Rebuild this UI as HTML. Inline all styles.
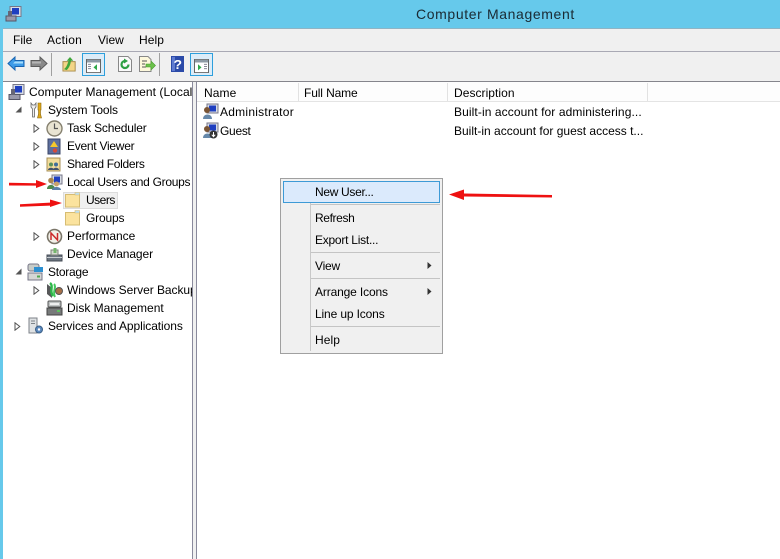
<!DOCTYPE html>
<html><head><meta charset="utf-8"><title>Computer Management</title>
<style>
html,body{margin:0;padding:0;background:#fff}
#p{position:relative;width:780px;height:559px;overflow:hidden;background:#fff;font:12px/16px "Liberation Sans",sans-serif;color:#000}
#p div,#p svg{position:absolute}
.t{white-space:nowrap}
</style></head><body><div id="p">
<div style="left:0;top:0;width:780px;height:28px;background:#66c9eb"></div>
<div style="left:0;top:28px;width:3px;height:531px;background:#66c9eb"></div>
<div style="left:3px;top:28px;width:777px;height:1px;background:#8fb4c4"></div>
<div style="left:3px;top:29px;width:777px;height:52px;background:#f0f0f0"></div>
<div style="left:3px;top:51px;width:777px;height:1px;background:#a9a9b4"></div>
<div style="left:3px;top:81px;width:777px;height:1px;background:#85858c"></div>
<div style="left:192px;top:82px;width:5px;height:477px;background:#f0f0f0"></div>
<div style="left:192px;top:82px;width:1px;height:477px;background:#8a8a9c"></div>
<div style="left:196px;top:82px;width:1px;height:477px;background:#8a8a9c"></div>
<div class="t" style="left:416px;top:5px;font-size:14px;line-height:18px;letter-spacing:.62px;color:#1a2a33">Computer Management</div>

<svg style="left:5px;top:5px" width="17" height="17" viewBox="0 0 17 17"><rect x="5" y="1.500" width="11" height="10" fill="#d8dde6" stroke="#778"/><rect x="7" y="3" width="7" height="6.500" fill="#1f3fc0"/><rect x="1" y="11" width="10" height="5" fill="#99a" stroke="#556"/><rect x="3" y="6" width="4" height="5" fill="#667"/></svg>

<div class="t" style="left:13px;top:32px;letter-spacing:0">File</div>
<div class="t" style="left:47px;top:32px;letter-spacing:.3px">Action</div>
<div class="t" style="left:98px;top:32px;letter-spacing:0">View</div>
<div class="t" style="left:139px;top:32px;letter-spacing:.1px">Help</div>

<svg style="left:7px;top:55px" width="18" height="17" viewBox="0 0 18 17"><path d="M1 8.500 8 2V5.500H17V11.500H8V15Z" fill="#3d9be8" stroke="#1763b0"/><path d="M8 6.500H16V8.500H6Z" fill="#a5dcfb"/></svg>
<svg style="left:30px;top:55px" width="18" height="17" viewBox="0 0 18 17"><path d="M17 8.500 10 2V5.500H1V11.500H10V15Z" fill="#8a8a8a" stroke="#5c5c5c"/><path d="M2 6.500H11V8.500H2Z" fill="#b5b5b5"/></svg>
<div style="left:51px;top:53px;width:1px;height:23px;background:#a0a0a0"></div>
<svg style="left:62px;top:56px" width="16" height="16" viewBox="0 0 17 17"><path d="M1 6H14V16H1Z" fill="#f3d587" stroke="#a88b4a"/><path d="M2 14C5 12 6 8 7 5L5 5 8.500 1 12 5 9.500 5C9 9 8 12 5 15Z" fill="#3fa63a"/></svg>
<div style="left:82px;top:53px;width:23px;height:23px;border:1px solid #2d9fdc;box-sizing:border-box;background:#dcecf8"></div>
<svg style="left:86px;top:59px" width="15" height="14" viewBox="0 0 15 16" preserveAspectRatio="none"><rect x=".5" y=".5" width="14" height="15" fill="#fff" stroke="#666"/><rect x="1" y="1" width="13" height="3" fill="#8d9aa5"/><path d="M2 6H5M2 8.500H5M2 11H5" stroke="#778" /><path d="M11 6V13L7.500 9.500Z" fill="#2fa84a"/></svg>
<svg style="left:118px;top:56px" width="14" height="16" viewBox="0 0 14 16"><path d="M.5.5H10L13.500 4V15.500H.5Z" fill="#fafafa" stroke="#888"/><path d="M10.500 8.500A3.500 3.500 0 1 1 7 5" fill="none" stroke="#2ea043" stroke-width="2.200"/><path d="M6 2.500 10 5 6 7.500Z" fill="#2ea043"/></svg>
<svg style="left:139px;top:56px" width="17" height="16" viewBox="0 0 17 16"><path d="M.5.500H9L12 3.500V15.500H.5Z" fill="#fdf8dc" stroke="#888"/><path d="M3 5H8M3 8H6M3 11H7" stroke="#555"/><path d="M7 8H12V5L16.500 9.500 12 14V11H7Z" fill="#6cc24a" stroke="#479a2e" stroke-width=".6"/></svg>
<div style="left:159px;top:53px;width:1px;height:23px;background:#a0a0a0"></div>
<svg style="left:171px;top:56px" width="13" height="16" viewBox="0 0 13 17" preserveAspectRatio="none"><rect width="13" height="17" fill="#2b4aa8"/><rect x="1" y="1" width="3" height="15" fill="#5f7bd0"/><text x="6.800" y="14" font-family="Liberation Sans" font-size="14" font-weight="bold" text-anchor="middle" fill="#fff">?</text></svg>
<div style="left:190px;top:53px;width:23px;height:23px;border:1px solid #2d9fdc;box-sizing:border-box;background:#dcecf8"></div>
<svg style="left:194px;top:59px" width="15" height="14" viewBox="0 0 15 16" preserveAspectRatio="none"><rect x=".5" y=".5" width="14" height="15" fill="#fff" stroke="#666"/><rect x="1" y="1" width="13" height="3" fill="#8d9aa5"/><path d="M10 6H13M10 8.500H13M10 11H13" stroke="#778"/><path d="M4 6V13L7.500 9.500Z" fill="#2fa84a"/></svg>

<!-- tree -->
<svg style="left:8px;top:84px" width="17" height="17" viewBox="0 0 17 17"><rect x="5" y=".5" width="11" height="10" fill="#d8dde6" stroke="#778"/><rect x="7" y="2" width="7" height="6.500" fill="#1f3fc0"/><rect x="1" y="10.500" width="11" height="5" fill="#99a" stroke="#556"/><rect x="3" y="5" width="4" height="6" fill="#667"/></svg>
<div class="t" style="left:29px;top:84px;width:163px;overflow:hidden;letter-spacing:.05px">Computer Management (Local</div>

<svg style="left:15px;top:106px" width="7" height="7" viewBox="0 0 7 7"><path d="M6.500 .5V6.500H.5Z" fill="#555"/></svg>
<svg style="left:29px;top:102px" width="14" height="17" viewBox="0 0 14 17"><path d="M2 1V5L3.500 7V15H5.500V7L7 5V1L5.500 3H3.500Z" fill="#eee" stroke="#666" stroke-width=".8"/><path d="M9 1H12V8H11.500V12L12.500 16H8.500L9.500 12V8H9Z" fill="#e0a818" stroke="#86650e" stroke-width=".6"/></svg>
<div class="t" style="left:48px;top:102px;letter-spacing:-.1px">System Tools</div>

<svg style="left:33px;top:124px" width="7" height="9" viewBox="0 0 7 9"><path d="M1 .8V8.200L5.800 4.500Z" fill="#fff" stroke="#555"/></svg>
<svg style="left:46px;top:120px" width="17" height="17" viewBox="0 0 17 17"><circle cx="8.500" cy="8.500" r="7.500" fill="#e9e4d2" stroke="#85806f" stroke-width="1.400"/><path d="M8.500 3.500V8.500H12" fill="none" stroke="#555" stroke-width="1.200"/></svg>
<div class="t" style="left:67px;top:120px;letter-spacing:-.18px">Task Scheduler</div>

<svg style="left:33px;top:142px" width="7" height="9" viewBox="0 0 7 9"><path d="M1 .8V8.200L5.800 4.500Z" fill="#fff" stroke="#555"/></svg>
<svg style="left:47px;top:138px" width="14" height="17" viewBox="0 0 14 17"><rect x="1" y="1" width="12" height="15" fill="#5d6f9e" stroke="#3a4567"/><path d="M7 3 11 9H3Z" fill="#f5c92d"/><circle cx="8" cy="12.500" r="2.200" fill="#d34a3c"/></svg>
<div class="t" style="left:67px;top:138px;letter-spacing:-.26px">Event Viewer</div>

<svg style="left:33px;top:160px" width="7" height="9" viewBox="0 0 7 9"><path d="M1 .8V8.200L5.800 4.500Z" fill="#fff" stroke="#555"/></svg>
<svg style="left:46px;top:156px" width="15" height="16" viewBox="0 0 15 16"><path d="M1 2H14V15H1Z" fill="#f2dc9a" stroke="#a89058"/><circle cx="5" cy="8.500" r="2" fill="#5a8f5a"/><circle cx="10" cy="8.500" r="2" fill="#3f6d9a"/><path d="M2 14C2 11 8 11 8 14ZM7 14C7 11 13 11 13 14Z" fill="#40506a"/></svg>
<div class="t" style="left:67px;top:156px;letter-spacing:-.32px">Shared Folders</div>

<svg style="left:46px;top:174px" width="17" height="17" viewBox="0 0 17 17"><rect x="6" y="1" width="10" height="9" fill="#d8dde6" stroke="#778"/><rect x="8" y="2.500" width="6" height="6" fill="#1f3fc0"/><circle cx="5" cy="6.500" r="2.800" fill="#a8854f"/><circle cx="10.500" cy="10" r="2.500" fill="#c9a26a"/><path d="M1 15C1 9.500 9 9.500 9 15Z" fill="#4d8a4d"/><path d="M6 16C6 12 15 12 15 16Z" fill="#5a7fa8"/></svg>
<div class="t" style="left:67px;top:174px;letter-spacing:-.28px">Local Users and Groups</div>

<div style="left:63px;top:192px;width:55px;height:17px;background:#f0f0f0;border:1px solid #dcdcdc;box-sizing:border-box"></div>
<svg style="left:65px;top:192px" width="15" height="16" viewBox="0 0 15 16"><path d="M.5 2.500H14.500V15H.5Z" fill="#fbe39e" stroke="#d6bc72"/><path d="M10 .5H14.500V3H10Z" fill="#bfe0f0" stroke="#d6bc72" stroke-width=".6"/></svg>
<div class="t" style="left:86px;top:192px;letter-spacing:-.5px">Users</div>
<svg style="left:65px;top:210px" width="15" height="16" viewBox="0 0 15 16"><path d="M.5 2.500H14.500V15H.5Z" fill="#fbe39e" stroke="#d6bc72"/><path d="M10 .5H14.500V3H10Z" fill="#bfe0f0" stroke="#d6bc72" stroke-width=".6"/></svg>
<div class="t" style="left:86px;top:210px;letter-spacing:-.18px">Groups</div>

<svg style="left:33px;top:232px" width="7" height="9" viewBox="0 0 7 9"><path d="M1 .8V8.200L5.800 4.500Z" fill="#fff" stroke="#555"/></svg>
<svg style="left:46px;top:228px" width="17" height="17" viewBox="0 0 17 17"><circle cx="8.500" cy="8.500" r="7" fill="#f2f0e8" stroke="#7a7568" stroke-width="1.600"/><path d="M5 12V5L11.500 12V5" fill="none" stroke="#cc2a2a" stroke-width="1.500"/></svg>
<div class="t" style="left:67px;top:228px;letter-spacing:-.04px">Performance</div>

<svg style="left:46px;top:246px" width="17" height="16" viewBox="0 0 17 16"><path d="M1 9H16V15H1Z" fill="#6b7480" stroke="#444b55"/><path d="M5 9V4H12V9Z" fill="#d6dbd2" stroke="#7c8278"/><rect x="7.500" y="2" width="3" height="5" fill="#74b56c"/><path d="M1 11.500H16" stroke="#c8ccd0"/></svg>
<div class="t" style="left:67px;top:246px;letter-spacing:-.1px">Device Manager</div>

<svg style="left:15px;top:268px" width="7" height="7" viewBox="0 0 7 7"><path d="M6.500 .5V6.500H.5Z" fill="#555"/></svg>
<svg style="left:27px;top:263px" width="17" height="18" viewBox="0 0 17 18"><rect x="1" y="1" width="11" height="7" rx="2" fill="#c8ccc8" stroke="#778"/><rect x="7" y="4" width="9" height="5" fill="#2d8fd0"/><rect x="1" y="10" width="14" height="7" fill="#d4d6d4" stroke="#778"/><rect x="10" y="12.500" width="3" height="2" fill="#4fa84f"/></svg>
<div class="t" style="left:48px;top:264px;letter-spacing:-.25px">Storage</div>

<svg style="left:33px;top:286px" width="7" height="9" viewBox="0 0 7 9"><path d="M1 .8V8.200L5.800 4.500Z" fill="#fff" stroke="#555"/></svg>
<svg style="left:46px;top:281px" width="17" height="18" viewBox="0 0 17 18"><path d="M1 3 6 7V17L1 13Z" fill="#57585a"/><path d="M4 2C8 5 3 10 7 15" fill="none" stroke="#2fb84a" stroke-width="2.400"/><path d="M8 3C11 6 6 11 9 16" fill="none" stroke="#43c95c" stroke-width="2"/><circle cx="13" cy="10" r="3.500" fill="#a87048" stroke="#555"/></svg>
<div class="t" style="left:67px;top:282px;width:125px;overflow:hidden;letter-spacing:-.05px">Windows Server Backup</div>

<svg style="left:46px;top:300px" width="17" height="16" viewBox="0 0 17 16"><rect x="2" y="1" width="13" height="6" rx="1" fill="#bfc2c2" stroke="#555"/><rect x="4" y="3" width="9" height="2" fill="#eee"/><rect x="1" y="8" width="15" height="7" fill="#777a7a" stroke="#444"/><rect x="11" y="10" width="3" height="2" fill="#5ec15e"/></svg>
<div class="t" style="left:67px;top:300px;letter-spacing:0">Disk Management</div>

<svg style="left:14px;top:322px" width="7" height="9" viewBox="0 0 7 9"><path d="M1 .8V8.200L5.800 4.500Z" fill="#fff" stroke="#555"/></svg>
<svg style="left:28px;top:317px" width="16" height="18" viewBox="0 0 16 18"><rect x="1" y="1" width="8" height="15" fill="#dfe2e4" stroke="#7d8288"/><path d="M3 4H7M3 6.500H7" stroke="#7d8288"/><circle cx="11" cy="12.500" r="3.500" fill="#5b88bd" stroke="#3c6088"/><circle cx="11" cy="12.500" r="1.200" fill="#fff"/></svg>
<div class="t" style="left:48px;top:318px;letter-spacing:-.08px">Services and Applications</div>

<!-- arrows in tree -->
<svg style="left:0;top:170px" width="130" height="40" viewBox="0 0 130 40"><path d="M9 12.800 36 13.200V10L47 14 36 18V15.600L9 15.500Z" fill="#ee1111"/><path d="M20 34.200 50 32.600V29.500L62 33 50 37V35.600L20 36.800Z" fill="#ee1111"/></svg>

<!-- list -->
<div style="left:197px;top:82px;width:583px;height:20px;background:#fdfdfd;border-bottom:1px solid #e4e4e4;box-sizing:border-box"></div>
<div style="left:298px;top:83px;width:1px;height:18px;background:#e2e2e2"></div>
<div style="left:447px;top:83px;width:1px;height:18px;background:#e2e2e2"></div>
<div style="left:647px;top:83px;width:1px;height:18px;background:#e2e2e2"></div>
<div class="t" style="left:204px;top:85px;letter-spacing:.1px">Name</div>
<div class="t" style="left:304px;top:85px;letter-spacing:-.12px">Full Name</div>
<div class="t" style="left:454px;top:85px;letter-spacing:.05px">Description</div>

<svg style="left:202px;top:103px" width="17" height="17" viewBox="0 0 17 17"><rect x="5" y="1" width="11" height="9" fill="#d8dde6" stroke="#778"/><rect x="7" y="2.500" width="7" height="6" fill="#1f3fc0"/><circle cx="5" cy="7" r="3" fill="#7a5535"/><path d="M1 16C1 10 10 10 10 16Z" fill="#6688aa"/></svg>
<div class="t" style="left:220px;top:104px;letter-spacing:.25px">Administrator</div>
<div class="t" style="left:454px;top:104px;letter-spacing:.1px">Built-in account for administering...</div>
<svg style="left:202px;top:122px" width="17" height="17" viewBox="0 0 17 17"><rect x="5" y="1" width="11" height="9" fill="#d8dde6" stroke="#778"/><rect x="7" y="2.500" width="7" height="6" fill="#1f3fc0"/><circle cx="5" cy="7" r="3" fill="#7a5535"/><path d="M1 16C1 10 10 10 10 16Z" fill="#6688aa"/><circle cx="11.500" cy="12.500" r="4" fill="#333"/><path d="M11.500 10V14M9.800 12.700 11.500 14.700 13.200 12.700" stroke="#fff" fill="none"/></svg>
<div class="t" style="left:220px;top:123px;letter-spacing:-.28px">Guest</div>
<div class="t" style="left:454px;top:123px;letter-spacing:0">Built-in account for guest access t...</div>

<!-- context menu -->
<div style="left:280px;top:178px;width:163px;height:176px;background:#f0f0f0;border:1px solid #a0a0a0;box-sizing:border-box"></div>
<div style="left:310px;top:203px;width:1px;height:148px;background:#c8c8c8"></div>
<div style="left:283px;top:181px;width:157px;height:22px;background:#dbeafc;border:1px solid #3d9ad6;box-sizing:border-box"></div>
<div style="left:311px;top:204px;width:129px;height:1px;background:#c4c4c4"></div>
<div style="left:311px;top:252px;width:129px;height:1px;background:#c4c4c4"></div>
<div style="left:311px;top:278px;width:129px;height:1px;background:#c4c4c4"></div>
<div style="left:311px;top:326px;width:129px;height:1px;background:#c4c4c4"></div>
<div class="t" style="left:315px;top:184px;letter-spacing:-.32px">New User...</div>
<div class="t" style="left:315px;top:210px;letter-spacing:-.38px">Refresh</div>
<div class="t" style="left:315px;top:232px;letter-spacing:-.25px">Export List...</div>
<div class="t" style="left:315px;top:258px;letter-spacing:-.2px">View</div>
<div class="t" style="left:315px;top:284px;letter-spacing:-.14px">Arrange Icons</div>
<div class="t" style="left:315px;top:306px;letter-spacing:-.14px">Line up Icons</div>
<div class="t" style="left:315px;top:332px;letter-spacing:.1px">Help</div>
<svg style="left:427px;top:262px" width="5" height="7" viewBox="0 0 5 7"><path d="M.5 0 4.500 3.500.5 7Z" fill="#333"/></svg>
<svg style="left:427px;top:288px" width="5" height="7" viewBox="0 0 5 7"><path d="M.5 0 4.500 3.500.5 7Z" fill="#333"/></svg>

<svg style="left:445px;top:185px" width="110" height="20" viewBox="0 0 110 20"><path d="M4 9.500 19 4.500V8.500L107 10V12.500L19 11.500V15Z" fill="#ee1111"/></svg>
</div></body></html>
